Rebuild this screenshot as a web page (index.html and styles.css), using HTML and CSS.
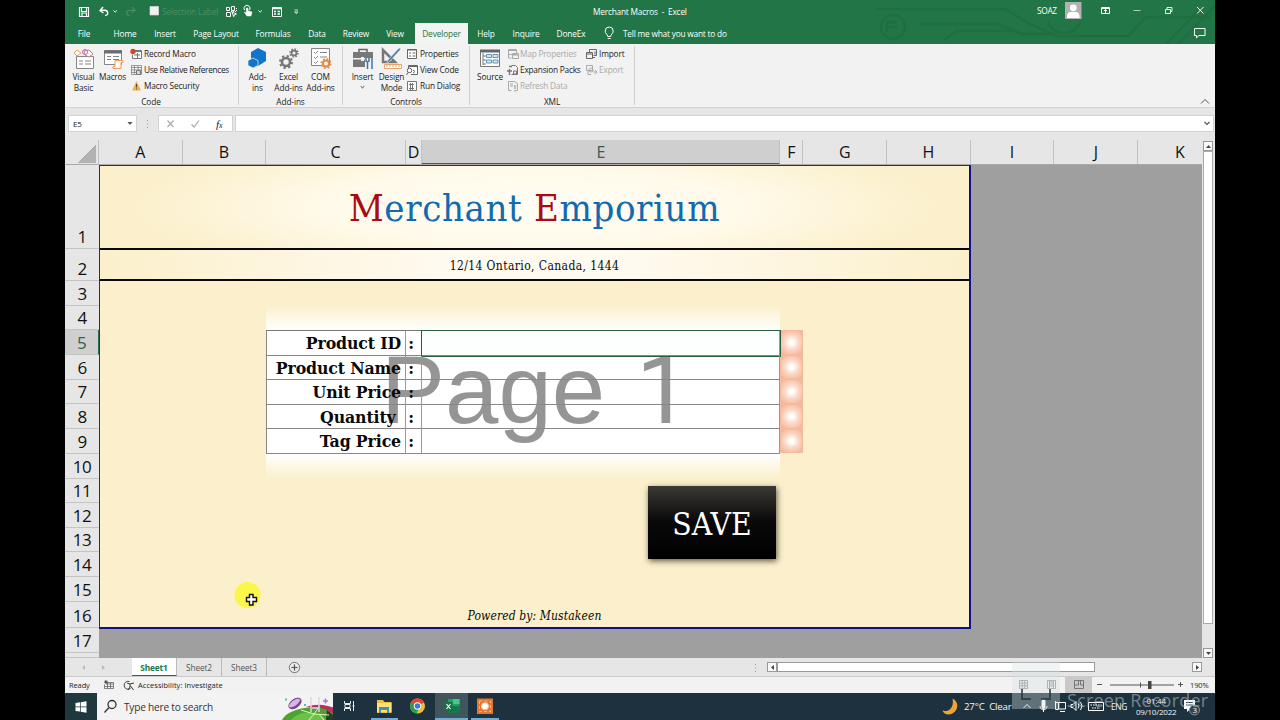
FILE: index.html
```html
<!DOCTYPE html>
<html lang="en">
<head>
<meta charset="utf-8">
<title>Merchant Macros - Excel</title>
<link rel="stylesheet" href="styles.css">
</head>
<body>
<div class="app">
  <header class="chrome">
    <svg class="circuit" width="355" height="44" viewBox="0 0 355 44" fill="none" stroke="#1b6439" stroke-width="2.5">
      <path d="M16 9H145L170 24L196 36H268L286 17H350M60 24H138L162 34H190M84 40L96 31H155M306 44L340 9M318 44L355 6"/><circle cx="33" cy="27" r="12"/><path d="M27 22h10M27 27h10M27 22v10"/><path d="M188 22a17 17 0 0 0 32 0"/>
    </svg>
    <div class="titlebar">
      <svg width="97" height="22" viewBox="65 0 97 22" fill="none" stroke="#fff" stroke-width="1.2">
        <path d="M79.500 7.500h9v9h-9zM81.500 8v3.500h5V8M82 16v-3h4.500v3"/>
        <path d="M103 7l-3 3.500 3.500 2.500M100.500 10.300h4c4 0 4.500 5 .5 5.300" stroke-width="1.400"/><path d="M113.500 10.500l1.700 1.700 1.700-1.700" stroke-width="1"/>
        <path d="M132 7l3 3.500-3.500 2.500M134.500 10.300h-5c-3.500 0-4 5 0 5.300" stroke="#4b8c65"/>
        <path d="M150 6.500h8.500v8.500h-8.500z" fill="#f1f1f1" stroke="#e0d5da" stroke-width=".7"/>
      </svg>
      <span class="dim">Selection Label</span>
      <svg width="90" height="22" viewBox="218 0 90 22" fill="none" stroke="#fff">
        <path d="M226.500 7.500h3v3h-3zM231.500 6.500h3v4h-3zM226.500 12.500h4v4h-4z"/><path d="M232 12l4.500 2-2 .7-.8 2z"/><path d="M231 11.500h5M236.500 8v4" stroke-dasharray="1 1"/>
        <path d="M244.500 10a3 3 0 1 1 5 0" /><path d="M246.300 8v5l-2-1 2.500 4h4.200l1-4-4-1.200V8z" fill="#fff" stroke-width=".5"/>
        <path d="M258.500 10.500l1.700 1.700 1.700-1.700"/>
        <path d="M272.500 7.500h9v9h-9z"/><path d="M272 8.500h10M274 11.500h2M277.500 11.500h2.500M274 14h2M277.500 14h2.500" stroke-width="1.3"/>
        <path d="M294.500 10h3.500M294.600 12h3.200l-1.600 1.600z" stroke-width=".8"/>
      </svg>
      <span class="doc">Merchant Macros&nbsp; -&nbsp; Excel</span>
      <span class="user">SOAZ</span>
      <svg width="157" height="22" viewBox="1058 0 157 22" fill="none" stroke="#fff">
        <path d="M1065 2h16.500v17h-16.500z" fill="#b2b0b0" stroke="none"/><circle cx="1073.300" cy="7.800" r="3.400" fill="#fff" stroke="none"/><path d="M1067 18c0-7 3-6 6.300-6s6.300-1 6.300 6z" fill="#fff" stroke="none"/>
        <path d="M1101.500 7.500h8v6h-8zM1101 8.500h9"/><path d="M1105.500 13v-3.500M1104 11l1.500-1.500 1.500 1.500" stroke-width=".9"/>
        <path d="M1133.500 10.500h7" stroke="#a9cdb8"/><path d="M1165.500 9.500h5v4h-5zM1167 9V7.500h5v4h-1.500" stroke-width=".9"/><path d="M1197 7l6.500 6.500M1203.500 7l-6.500 6.500"/>
      </svg>
    </div>
    <nav class="tabs">
      <span class="w38">File</span><span class="w44">Home</span><span class="w36">Insert</span><span class="w66">Page Layout</span><span class="w48">Formulas</span><span class="w40">Data</span><span class="w38">Review</span><span class="w40">View</span><span class="active">Developer</span><span class="w36">Help</span><span class="w44">Inquire</span><span class="w46">DoneEx</span>
      <svg width="29" height="22" viewBox="594 -1 29 22" fill="none" stroke="#fff"><path d="M607.700 13.500c0-2.500-2.500-2.500-2.500-5.500a4 4 0 0 1 8 0c0 3-2.500 3-2.500 5.500zM607.700 15.500h3"/></svg>
      <span class="tell">Tell me what you want to do</span>
      <svg class="comment" width="14" height="12" viewBox="0 0 14 12" fill="none" stroke="#fff"><path d="M1.500 1.500h10.500v7H6l-2.500 2.300V8.500h-2z"/></svg>
    </nav>
  </header>

  <section class="ribbon">
    <div class="group code">
      <div class="tools">
        <div class="big w37"><svg width="24" height="24" viewBox="0 0 24 24" fill="none" stroke="#858585"><path d="M4.500 9.500h17v12h-17z" fill="#fff"/><path d="M7 14h4M13 14h6M7 17h4M13 17h6" /><path d="M5 3l4 3-4 3-3-3z" stroke="#e9a347" fill="#fff"/><path d="M12 4l5-1 4 4-4 3-4-2z" stroke="#c87884" fill="#fff"/><circle cx="13" cy="5" r="2.500" stroke="#b76bb3"/></svg><span>Visual<br>Basic</span></div>
        <div class="big w25 macros"><svg width="24" height="24" viewBox="0 0 24 24" fill="none" stroke="#858585"><path d="M3.500 3.500h17v14h-17z" fill="#fff"/><path d="M3 5h18" stroke="#6c6c6c" stroke-width="3"/><path d="M6 9.500h4M12 9.500h6M6 12.500h4M12 12.500h6"/><path d="M14 13.500h8v2h-2v6h-8v-2h2z" fill="#fff" stroke="#e8995b"/></svg><span>Macros</span></div>
        <div class="rows">
          <div><svg width="13" height="12" viewBox="0 0 13 12" fill="none" stroke="#777"><path d="M4.500 2.500h7v8h-9v-4" fill="#fff"/><path d="M4 3.500h7M4 7h6M7.500 5v5"/><circle cx="3" cy="3.500" r="2.700" fill="#d2462c" stroke="none"/></svg>Record Macro</div>
          <div class="tight"><svg width="13" height="12" viewBox="0 0 13 12" fill="none" stroke="#777"><path d="M1.500 1.500h10v9h-10zM1 3.500h11M1 6h11M1 8.500h11M4.500 2v8M8 2v8" stroke-width=".7"/><path d="M6.500 6.500h4v4h-4z" fill="#cad5df"/></svg>Use Relative References</div>
          <div><svg width="13" height="12" viewBox="0 0 13 12"><path d="M6.500 1l4.500 9.500H2z" fill="#e9b44d"/><path d="M6.500 4v3.500M6.500 8.500v1" stroke="#594325"/></svg>Macro Security</div>
        </div>
      </div>
      <footer>Code</footer>
    </div>
    <div class="group addins">
      <div class="tools">
        <div class="big w31"><svg width="24" height="24" viewBox="0 0 24 24" fill="#1275ca"><path d="M12 1l8 4v9l-8 5-7-5V5z"/><path d="M7 11l5 2.500v5L7 21l-5-2.500v-5z" stroke="#f2f2f2" stroke-width=".7"/></svg><span>Add-<br>ins</span></div>
        <div class="big w31"><svg width="24" height="24" viewBox="0 0 24 24" fill="none" stroke="#777"><circle cx="9" cy="15" r="4" stroke-width="2.500"/><circle cx="9" cy="15" r="6" stroke-width="2" stroke-dasharray="2.300 2.400"/><circle cx="17" cy="6" r="2.500" stroke-width="1.800"/><circle cx="17" cy="6" r="4" stroke-width="1.500" stroke-dasharray="1.500 1.640"/></svg><span>Excel<br>Add-ins</span></div>
        <div class="big w33"><svg width="24" height="24" viewBox="0 0 24 24" fill="none" stroke="#858585"><path d="M2.500 1.500h18v17h-18z" fill="#fff"/><path d="M5 5l1.500 1.500L9 4M5 10l1.500 1.500L9 9M5 15l1.500 1.500L9 14M11 5.500h7M11 10h7"/><circle cx="17" cy="16.500" r="3" stroke="#e58a42" stroke-width="2" fill="#fff"/><circle cx="17" cy="16.500" r="4.700" stroke="#e58a42" stroke-width="1.700" stroke-dasharray="1.900 1.790"/></svg><span>COM<br>Add-ins</span></div>
      </div>
      <footer>Add-ins</footer>
    </div>
    <div class="group controls">
      <div class="tools">
        <div class="big w31"><svg width="24" height="24" viewBox="0 0 24 24"><path d="M8 5V2.500h8V5" fill="none" stroke="#666" stroke-width="1.500"/><path d="M2 5h20v6H2zM2 12.500h16V20H2z" fill="#777"/><path d="M10 10h3v4h-3z" fill="#f2f2f2"/><path d="M14 11h9v11h-9z" fill="#f2f2f2"/><path d="M15 11v3l1.500 1V22M18 11v3l-1.500 1M21 11v5M21 16v6" stroke="#3777ad" fill="none" stroke-width="1.500"/></svg><span>Insert<br><i class="chev"></i></span></div>
        <div class="big w27"><svg width="24" height="24" viewBox="0 0 24 24" fill="none"><path d="M3 3v12h12z" stroke="#777" stroke-width="2.500"/><path d="M21 2L9 15l-2 .5L8 13 19 1z" fill="#457ea9" stroke="#f2f2f2" stroke-width=".5"/><path d="M4.500 17.500h17v4h-17z" fill="#fff" stroke="#e7a469"/><path d="M7 18v2M10 18v2M13 18v2M16 18v2M19 18v2" stroke="#e7a469"/></svg><span>Design<br>Mode</span></div>
        <div class="rows">
          <div><svg width="13" height="12" viewBox="0 0 13 12" fill="none" stroke="#666"><path d="M1.500 1.500h9v9h-9z" fill="#fff"/><path d="M1 2h10M3 5h2M6.500 5h3M3 8h2M6.500 8h3"/></svg>Properties</div>
          <div><svg width="13" height="12" viewBox="0 0 13 12" fill="none" stroke="#666"><path d="M2.500 4V1.500h9v9H5" fill="#fff"/><path d="M2 2.500h9M7 6l2 1.500L7 9"/><circle cx="3.500" cy="6.500" r="2.300"/><path d="M2 8.500L.5 11"/></svg>View Code</div>
          <div><svg width="13" height="12" viewBox="0 0 13 12" fill="none" stroke="#777"><path d="M1.500 1.500h9v9h-9z" fill="#fff"/><path d="M4.500 3v7M6.500 3v7M3 4.500h5M3 8.500h5"/></svg>Run Dialog</div>
        </div>
      </div>
      <footer>Controls</footer>
    </div>
    <div class="group xml">
      <div class="tools">
        <div class="big w37 source"><svg width="24" height="24" viewBox="0 0 24 24" fill="none"><path d="M2.500 3.500h19v16h-19z" fill="#fff" stroke="#777"/><path d="M2 4h20" stroke="#666" stroke-width="3"/><path d="M5 6v12M5 9h3M5 13h3M5 17h3" stroke="#777"/><path d="M8.500 7.500h5v3h-5zM8.500 13h5v3h-5zM15 7.500h5v3h-5zM15 13h5v3h-5z" stroke="#5d94bd" fill="#d8e8f2"/></svg><span>Source</span></div>
        <div class="rows xmlrows">
          <div class="off tight"><svg width="13" height="12" viewBox="0 0 13 12" fill="none" stroke="#aaa"><path d="M1.500 1.500h8v5h-8zM1 2.500h9M5.500 5.500h6v5h-6zM5 7h7M1.500 6v4h3"/></svg>Map Properties</div>
          <div class="tight"><svg width="13" height="12" viewBox="0 0 13 12" fill="none" stroke="#777"><path d="M4.500 1.500h4l2 2v7h-6"/><path d="M2.500 5v6M0 7h5M2 2.500h3" stroke-width="1.400"/><path d="M6.500 7h3v3h-3z"/></svg>Expansion Packs</div>
          <div class="off tight"><svg width="13" height="12" viewBox="0 0 13 12" fill="none" stroke="#aaa"><path d="M4.500 10.500h-3v-9h6l3 2v7h-2M3 4h3M3 6h3"/><path d="M8 5v4M8 10v1.500" stroke-width="1.500"/></svg>Refresh Data</div>
        </div>
        <div class="rows">
          <div><svg width="13" height="12" viewBox="0 0 13 12" fill="none" stroke="#666"><path d="M4.500 4V1.500h7v6h-3M1.500 4.500h6v6h-6zM1 6h7M10 3.500v3M10 9.500H8"/></svg>Import</div>
          <div class="off"><svg width="13" height="12" viewBox="0 0 13 12" fill="none" stroke="#aaa"><path d="M1.500 1.500h6v5h-6zM3 6v4.500h3M8 8h3.500M10 6l2 2-2 2.500"/><circle cx="6" cy="6" r="2"/></svg>Export</div>
        </div>
      </div>
      <footer>XML</footer>
    </div>
    <svg class="collapse" width="10" height="7" viewBox="0 0 10 7" fill="none" stroke="#555"><path d="M1 5.500l4-4 4 4"/></svg>
  </section>

  <section class="formula">
    <div class="namebox"><span>E5</span><svg width="6" height="5" viewBox="0 0 6 5"><path d="M.5 1h5L3 4z" fill="#555"/></svg></div>
    <svg class="grip" width="3" height="10" viewBox="0 0 3 10" fill="#999"><path d="M1 1h1v1H1zM1 4.500h1v1H1zM1 8h1v1H1z"/></svg>
    <div class="fx"><svg width="73" height="16" viewBox="0 0 73 16" fill="none" stroke="#aaa" stroke-width="1.200"><path d="M8.500 4.500l6 6.500M14.500 4.500l-6 6.500M32.500 8.500l2.500 2.500 5-6.500"/></svg><i>f<small>x</small></i></div>
    <div class="input"><svg width="6" height="5" viewBox="0 0 6 5" fill="none" stroke="#555" stroke-width="1.200"><path d="M.5 1L3 3.500 5.500 1"/></svg></div>
  </section>

  <main class="workbook">
    <div class="sheet">
      <div class="colheads">
        <span class="corner"></span><span>A</span><span>B</span><span class="c">C</span><span class="d">D</span><span class="e">E</span><span class="f">F</span><span>G</span><span>H</span><span>I</span><span>J</span><span class="k">K</span>
      </div>
      <div class="gridarea">
        <div class="rowheads">
          <span>1</span><span>2</span><span>3</span><span>4</span><span class="sel">5</span><span>6</span><span>7</span><span>8</span><span>9</span><span>10</span><span>11</span><span>12</span><span>13</span><span>14</span><span>15</span><span>16</span><span>17</span><span></span>
        </div>
        <div class="page">
          <h1><span><b>M</b>erchant <b>E</b>mporium</span></h1>
          <div class="address"><span>12/14 Ontario, Canada, 1444</span></div>
          <div class="form">
            <div class="halo top"></div>
            <div class="entry">
              <div class="watermark">Page <span>1</span></div>
              <div class="fields">
                <span>Product ID</span><span>:</span><span class="cell selected"></span>
                <span>Product Name</span><span>:</span><span class="cell"></span>
                <span>Unit Price</span><span>:</span><span class="cell"></span>
                <span>Quantity&nbsp;</span><span>:</span><span class="cell"></span>
                <span>Tag Price</span><span>:</span><span class="cell"></span>
              </div>
              <div class="flags"><i></i><i></i><i></i><i></i><i></i></div>
            </div>
            <div class="halo bottom"></div>
          </div>
          <button class="save"><span>SAVE</span></button>
          <div class="powered"><span>Powered by: Mustakeen</span></div>
          <svg class="pointer" width="28" height="28" viewBox="0 0 28 28"><circle cx="13.500" cy="13" r="13" fill="#fbf73c" opacity=".9"/><path d="M15.500 12.500h3.500v3h3.500v4h-3.500v3.500h-3.500v-3.500h-3v-4h3z" fill="#fff" stroke="#111" stroke-width="1.400"/></svg>
        </div>
      </div>
    </div>
    <div class="vscroll"><span><svg width="7" height="5" viewBox="0 0 7 5"><path d="M1 4l2.500-3L6 4z" fill="#444"/></svg></span><b></b><span><svg width="7" height="5" viewBox="0 0 7 5"><path d="M1 1l2.500 3L6 1z" fill="#444"/></svg></span></div>
  </main>

  <div class="sheettabs">
    <svg width="67" height="19" viewBox="0 0 67 19" fill="#bbb"><path d="M20 7v5l-3-2.500zM37 7v5l3-2.500z"/></svg>
    <span class="current">Sheet1</span><span>Sheet2</span><span>Sheet3</span>
    <svg class="add" width="13" height="13" viewBox="0 0 13 13" fill="none" stroke="#777"><circle cx="6.500" cy="6.500" r="5.200"/><path d="M6.500 3.500v6M3.500 6.500h6" stroke="#555" stroke-width="1.200"/></svg>
    <svg class="dots" width="3" height="10" viewBox="0 0 3 10" fill="#999"><path d="M1 1h1v1H1zM1 4.500h1v1H1zM1 8h1v1H1z"/></svg>
    <div class="hscroll"><span><svg width="5" height="7" viewBox="0 0 5 7"><path d="M4 1L1 3.500 4 6z" fill="#444"/></svg></span><b></b><i></i><span><svg width="5" height="7" viewBox="0 0 5 7"><path d="M1 1l3 2.500L1 6z" fill="#444"/></svg></span></div>
  </div>

  <div class="status">
    <span class="ready">Ready</span>
    <svg width="36" height="16" viewBox="3 0 36 16" fill="none" stroke="#666"><path d="M8.500 5.500h7v6h-9v-4M8 7h7M7 9.500h8M9.500 6v5M12.500 6v5" stroke-width=".8"/><circle cx="8" cy="5" r="1.700" fill="#555" stroke="none"/><path d="M31.500 4.500a4 4 0 1 0 1 7" stroke="#444"/><path d="M29 6l3 1 4-1M32 7v3l-2 3M32.500 9l3 4" stroke="#333"/></svg>
    <span class="access">Accessibility: Investigate</span>
    <svg class="views" width="192" height="16" viewBox="998 0 192 16" fill="none" stroke="#999"><path d="M1065 0h27v16h-27z" fill="#c9c9c9" stroke="none"/><path d="M1019.500 3.500h8v8h-8zM1019 6.200h9M1019 8.800h9M1022.200 3v9M1024.800 3v9"/><path d="M1047.500 3.500h8v8h-8zM1049.500 5h4M1049.500 7h4M1049.500 9h4M1049.500 4v7M1053.500 4v7"/><path d="M1074.500 3.500h9v8h-9zM1078.500 4v4h-4M1080.500 4v4h3" stroke="#777"/><path d="M1097 7.500h5M1110 8h64M1178 7.500h5M1180.500 5v5M1140.500 5.500v5" stroke="#555"/><path d="M1148 4h3.500v8h-3.500z" fill="#444" stroke="none"/></svg>
    <span class="zoom">190%</span>
  </div>

  <footer class="taskbar">
    <div class="start"><svg width="12" height="12" viewBox="0 0 12 12" fill="#fff"><path d="M.5 2l4.500-.7V5.600H.5zM5.700 1.200L11.500.3v5.300H5.700zM.5 6.300H5v4.300L.5 10zM5.700 6.300h5.800v5.400l-5.800-.9z"/></svg></div>
    <div class="search">
      <svg width="27" height="27" viewBox="0 0 27 27" fill="none" stroke="#333" stroke-width="1.300"><circle cx="15" cy="11.500" r="4"/><path d="M12 14.500l-4.500 5"/></svg>
      <span>Type here to search</span>
      <svg class="art" width="52" height="27" viewBox="280 0 52 27" fill="none"><path d="M281 27c5-10 25-15 51-13v13z" fill="#4da32f"/><path d="M290 27c7-8 20-10 31-4l4 4z" fill="#6cc246"/><path d="M305 14c12-4 22-2 28 2v6c-5-6-14-8-28-8z" fill="#c02c62"/><path d="M326 17l6 5v5h-7z" fill="#283e28"/><ellipse cx="294" cy="10.500" rx="7.500" ry="4.500" transform="rotate(-35 294 10.500)" fill="#79438f"/><ellipse cx="293.500" cy="10" rx="6.500" ry="2.600" transform="rotate(-35 293.500 10)" fill="#d7b6e3"/><path d="M300 17l13 4 15 1M308 27l5-6 5-7M318 21l5 6" stroke="#e7f6c7"/><path d="M310 4v15M318 4v15M311 15h7" stroke="#d9d7df" stroke-width="1.500"/><path d="M322 8h5M324.500 5.500v5" stroke="#b779c9" stroke-width="1.500"/><path d="M284 6.500h2M303 12h2" stroke="#5ab8c5" stroke-width="2"/></svg>
    </div>
    <svg class="pinned" width="170" height="27" viewBox="333 0 170 27" fill="none">
      <path d="M344.500 8v2.500h6V8M344.500 18v-2.500h6V18M345 11.500h5v3h-5zM353.500 8v10M352.500 13h2" stroke="#e7edef"/>
      <path d="M377 7h6l1.500 2h7v11h-14.500z" fill="#efbf3d"/><path d="M377 10h14.500v9h-14.500z" fill="#ffdf78"/><path d="M379 14h10v6h-2v-3h-6v3h-2z" fill="#3f91bb"/>
      <circle cx="417.500" cy="13" r="7.500" fill="#f0bf2d"/><path d="M417.500 13L411 9.200a7.500 7.500 0 0 1 13 0z" fill="#df4434"/><path d="M411 9.200a7.500 7.500 0 0 0 5.500 11.200l3-6z" fill="#2c9d55"/><path d="M411 9.200h13l-6.500 4z" fill="#df4434"/><circle cx="417.500" cy="13" r="3.700" fill="#fff"/><circle cx="417.500" cy="13" r="2.800" fill="#367bdc"/>
      <path d="M435 0h33v27h-33z" fill="#40555c"/><path d="M448 6h11.500v14H448z" fill="#24a065"/><path d="M453 6h6.500v5H453z" fill="#45c885"/><path d="M448 13h12v7h-12z" fill="#17794b"/><path d="M444.500 9h8v8.500h-8z" fill="#107742"/><path d="M446.500 11l4 5M450.500 11l-4 5" stroke="#fff" stroke-width="1.200"/>
      <path d="M477 5.500h16v15.500h-16z" fill="#e4772f"/><path d="M479.500 8h11v10.500h-11z" stroke="#ffb485" stroke-dasharray="3 2"/><circle cx="485" cy="13.200" r="3.500" fill="#fff" stroke="#f8c7a0"/>
      <path d="M371 26h27M435 26h33M471 26h28" stroke="#72acd5" stroke-width="2"/>
    </svg>
    <svg class="moon" width="17" height="17" viewBox="0 0 17 17"><path d="M10.500.5c9 5 4 16-4 16-3 0-5-1.500-6-4 6 2 12-3 10-12z" fill="#f0a433"/></svg>
    <span class="temp">27°C&nbsp; Clear</span>
    <svg class="tray" width="86" height="27" viewBox="1020 0 86 27" fill="none" stroke="#fff"><path d="M1023.500 15l3.500-3.500 3.500 3.500"/><path d="M1043.500 8v6" stroke-width="4" stroke-linecap="round"/><path d="M1040 13c0 5 7 5 7 0M1043.500 16v3"/><path d="M1058.500 9.500h7v6.500h-7zM1060 18.500h5M1055.500 8v8.500h3M1055 9.500h3"/><path d="M1071 11.500h2l3-3v9l-3-3h-2zM1078 10.500q2 2.500 0 5M1080.500 9q3 4 0 8"/><path d="M1088.500 9.500h15v8h-15z"/><path d="M1090.500 12h11M1092 15h8" stroke-dasharray="1.500 1"/></svg>
    <span class="eng">ENG</span>
    <div class="clock"><span>01:44</span><span>09/10/2022</span></div>
    <svg class="note" width="18" height="19" viewBox="0 0 18 19"><path d="M1 2h11v9H7l-3 3v-3H1z" fill="#fff"/><path d="M3 4.500h7M3 7h7" stroke="#243d4d"/><circle cx="11.500" cy="12" r="5" fill="#31414b" stroke="#86939a"/><text x="9.500" y="15" fill="#fff" font-size="8">3</text></svg>
  </footer>
  <div class="recorder">
    <svg width="48" height="48" viewBox="0 0 48 48" fill="none"><path d="M0 0h48v48H0z" fill="#d9e0e4" opacity=".36"/><path d="M10 28v10h9M38 28v10h-9" stroke="#1e343f" stroke-width="2" opacity=".75"/></svg>
    <span>Screen Recorder</span>
  </div>
</div>
</body>
</html>
```
FILE: styles.css
```css
* { box-sizing: border-box; }
body { margin: 0; background: #000; font-family: "Open Sans", "Noto Sans", sans-serif; font-size: 8.3px; letter-spacing: -.12px; color: #1c1c1c; }
svg { display: block; flex: none; }
.app { position: relative; display: flex; flex-direction: column; width: 1150px; height: 720px; margin-left: 65px; overflow: hidden; background: #e6e6e6; white-space: nowrap; }

.chrome { position: relative; height: 44px; background: #217546; color: #fff; }
.circuit { position: absolute; right: 0; top: 0; opacity: .38; }
.titlebar { position: relative; display: flex; height: 22px; line-height: 23px; }
.dim { width: 56px; color: #4a9069; }
.doc { margin-left: 285px; width: 100px; letter-spacing: -.2px; }
.user { margin-left: auto; width: 21px; line-height: 21px; letter-spacing: -.3px; }
.tabs { position: relative; display: flex; height: 22px; align-items: stretch; line-height: 23px; }
.tabs span { text-align: center; }
.tabs .active { width: 53px; margin-top: 1px; line-height: 21px; background: #f3f3f3; color: #217546; }
.tell { letter-spacing: -.2px; }
.w25 { width: 25px; } .w27 { width: 27px; } .w31 { width: 31px; } .w33 { width: 33px; } .w36 { width: 36px; } .w37 { width: 37px; } .w38 { width: 38px; } .w40 { width: 40px; } .w44 { width: 44px; } .w46 { width: 46px; } .w48 { width: 48px; } .w66 { width: 66px; }
.comment { margin: 5px 8px 0 auto; }

.ribbon { display: flex; height: 64px; background: #f2f2f2; border-bottom: 1px solid #d2d2d2; padding-top: 2px; }
.group { height: 59px; border-right: 1px solid #cfcfcf; }
.code { width: 174px; } .addins { width: 104px; } .controls { width: 127px; } .xml { width: 165px; }
.tools { display: flex; height: 48px; }
.addins .tools { padding-left: 3px; } .controls .tools { padding-left: 4px; }
.group footer { text-align: center; line-height: 15px; }
.code footer { padding-right: 1px; }
.big { display: flex; flex-direction: column; align-items: center; padding-top: 1px; line-height: 11px; text-align: center; }
.macros { margin-left: -2px; }
.macros span { letter-spacing: -.25px; }
.source { padding-left: 3px; }
.big span { display: block; }
.chev { display: inline-block; width: 3px; height: 3px; border-right: 1px solid #777; border-bottom: 1px solid #777; transform: translateY(-3px) rotate(45deg); }
.rows { display: flex; flex-direction: column; line-height: 16px; margin-left: 5px; }
.rows div { display: flex; gap: 1px; align-items: center; height: 16px; letter-spacing: -.16px; }
.rows .tight { letter-spacing: -.32px; }
.controls .rows { margin-left: 1px; } .xml .rows { margin-left: 0; }
.xml .xmlrows { width: 78px; }
.xmlrows .tight { letter-spacing: -.22px; gap: 0; }
.off { color: #aaa; }
.collapse { margin: 52px 5px 0 auto; }

.formula { display: flex; height: 32px; padding-top: 7px; background: #e6e6e6; }
.namebox, .fx, .input { display: flex; align-items: center; height: 17px; background: #fff; border: 1px solid #d2d2d2; }
.namebox { width: 69px; margin-left: 3px; padding: 0 3px 0 4px; justify-content: space-between; font-size: 8px; }
.grip { margin: 4px 9px 0; }
.fx { width: 75px; }
.fx i { margin-left: -16px; font-family: "Liberation Serif", serif; font-size: 11px; }
.fx small { font-size: 8px; }
.input { flex: 1; justify-content: flex-end; margin: 0 1px 0 2px; padding-right: 3px; }

.workbook { display: flex; height: 518px; }
.sheet { width: 1137px; overflow: hidden; }
.colheads { display: flex; height: 25px; font-size: 16px; letter-spacing: 0; line-height: 25px; text-align: center; border-bottom: 1px solid #aaa; color: #111; }
.colheads span { flex: none; width: 83.700px; border-right: 1px solid #c1c1c1; }
.colheads .corner { width: 34px; background: linear-gradient(135deg, transparent 50%, #b2b2b2 50%) 12px 4px / 19px 19px no-repeat; }
.colheads .c { width: 139.500px; } .colheads .d { width: 16.500px; }
.colheads .e { width: 358px; background: #cfcfcf; border-bottom: 1px solid #2b6c56; color: #36604c; }
.colheads .f { width: 23px; } .colheads .k { border: 0; }
.gridarea { display: flex; height: 493px; background: #9f9f9f; }
.rowheads { display: grid; width: 34px; grid-template-rows: 84px 32px 25px 24px 25px 25px 24px 25px 25px 25px 24px 25px 24px 25px 25px 26px 25px 5px; background: #e6e6e6; font-size: 17px; letter-spacing: -.5px; color: #111; text-align: center; }
.rowheads span { display: flex; align-items: flex-end; justify-content: center; line-height: 23px; border-bottom: 1px solid #c4c4c4; overflow: hidden; }
.rowheads .sel { background: #cfcfcf; color: #36604c; border-right: 1px solid #2b6c56; }
.page { position: relative; display: flex; flex-direction: column; width: 872px; height: 464px; border: 1px solid #2a2596; border-right: 2px solid #10108f; border-bottom: 2px solid #10108f; background: #fbf0cb; font-family: "DejaVu Serif Condensed", "DejaVu Serif", serif; font-stretch: condensed; letter-spacing: 0; color: #090909; }
h1, .address { display: flex; flex: none; align-items: center; justify-content: center; margin: 0; border-bottom: 2px solid #08080c; background: radial-gradient(ellipse 47% 90% at 50% 50%, #fffdf5 0%, #fffaea 50%, #fbf0cb 100%); }
h1 { height: 84px; padding-top: 2px; font-size: 38px; font-weight: 400; letter-spacing: .6px; color: #116bae; }
h1 b { font-weight: 400; color: #a90c12; }
.address { height: 31px; padding-top: 2px; font-size: 12px; letter-spacing: .4px; background: linear-gradient(90deg, #fbf0cb, #fffaf0 40%, #fffaf0 60%, #fbf0cb); }
.form { padding: 24px 0 0 166px; }
.halo { width: 514px; height: 25px; }
.top { background: linear-gradient(#fbf0cb, #fff); } .bottom { background: linear-gradient(#fff, #fbf0cb); }
.entry { position: relative; display: flex; }
.fields { position: relative; display: grid; grid-template: repeat(5, 24.600px) / 139px 16px 358px; width: 514px; border-left: 1px solid #888; border-top: 1px solid #777; }
.entry::before { content: ""; position: absolute; width: 514px; height: 124px; background: #fff; }
.fields span { display: block; padding-right: 4px; border-right: 1px solid #999; border-bottom: 1px solid #888; text-align: right; font-size: 17.500px; font-weight: 700; letter-spacing: -.12px; line-height: 25px; }
.fields span:nth-child(3n+2) { padding-right: 7px; }
.fields .selected { outline: 1px solid #28603d; outline-offset: 0; background: #fdfffe; }
.watermark { position: absolute; left: 115px; top: 6px; font: 96px/108px "Liberation Sans", Arial, sans-serif; color: #959595; }
.watermark span { font-family: Roboto, sans-serif; font-size: 96px; margin-left: 4px; }
.flags { display: grid; grid-template-rows: repeat(5, 24.700px); width: 23px; }
.flags i { border: 1px solid #f3ba9c; background: radial-gradient(circle, #fff 12%, #fbd9c8 45%, #f6b799 90%); }
.save { align-self: flex-start; flex: none; width: 128px; height: 73px; margin: 7px 0 0 548px; border: 0; padding: 3px 0 0; background: linear-gradient(#3b3935, #090909 48%, #000); box-shadow: 1px 2px 6px #5d5640; color: #fff; font-family: inherit; font-stretch: condensed; font-size: 31.500px; }
.powered { margin-top: 49px; text-align: center; font-size: 12px; letter-spacing: .12px; line-height: 16px; font-style: italic; }
.pointer { position: absolute; left: 134px; top: 416px; }
.vscroll { display: flex; flex-direction: column; width: 13px; padding: 1px 1px 0; }
.vscroll span, .hscroll span { display: flex; flex: none; align-items: center; justify-content: center; width: 10px; height: 10px; border: 1px solid #999; background: #f9f9f9; }
.vscroll b { width: 10px; height: 473px; border: 1px solid #aaa; background: #fff; }
.vscroll span + b + span { margin-top: 24px; }

.sheettabs { display: flex; height: 19px; line-height: 19px; border-bottom: 1px solid #cacaca; }
.sheettabs > span { width: 45px; text-align: center; border-right: 1px solid #bbb; color: #555; }
.sheettabs .current { height: 18px; background: #fff; border-bottom: 1px solid #217546; color: #217546; font-weight: 700; }
.add { margin: 3px 0 0 21px; }
.dots { margin: 5px 0 0 453px; }
.hscroll { display: flex; width: 435px; margin: 4px 0 0 10px; }
.hscroll b { width: 318px; height: 10px; background: #fff; border: 1px solid #999; }
.hscroll i { flex: 1; }
.status { display: flex; height: 16px; line-height: 16px; background: #f2f2f2; font-size: 7.500px; }
.ready { margin-left: 4px; width: 32px; }
.access { margin-left: 1px; letter-spacing: .04px; }
.views { margin-left: auto; }
.zoom { width: 25px; }

.taskbar { display: flex; height: 27px; background: #1d323e; color: #f5f5f5; }
.start { width: 32px; padding: 8px 0 0 10px; background: #1f3840; }
.search { display: flex; width: 236px; background: #f3f3f3; color: #333; }
.search span { width: 104px; margin: 0 53px 0 0; line-height: 28px; font-size: 10.100px; letter-spacing: -.2px; }
.moon { margin: 5px 0 0 439px; }
.temp { margin-left: 5px; width: 49px; font-size: 9.700px; letter-spacing: -.2px; line-height: 27px; }
.tray { margin-left: 7px; }
.eng { margin-left: 5px; font-size: 8.400px; letter-spacing: -.3px; line-height: 27px; }
.clock { display: flex; flex-direction: column; width: 48px; align-items: center; margin-left: 5px; line-height: 11px; font-size: 8px; padding-top: 2px; letter-spacing: -.2px; }
.note { margin: 5px 0 0 3px; }
.recorder { position: absolute; left: 947px; top: 661px; display: flex; color: #c8d0d6; }
.recorder span { margin: 27px 0 0 7px; font-size: 18px; line-height: 24px; letter-spacing: .2px; opacity: .5; }
```
